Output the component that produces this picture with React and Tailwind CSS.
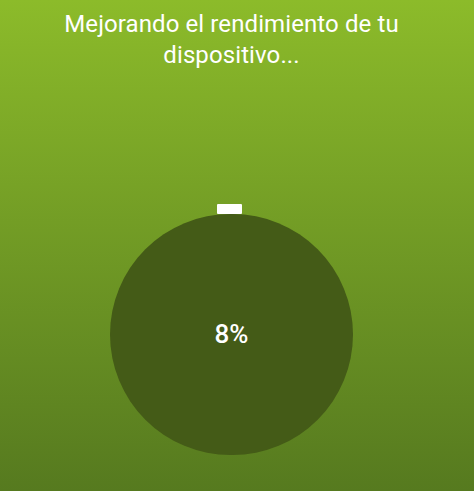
export default function App() {
  return (
    <div
      className="w-[474px] h-[491px] overflow-hidden flex flex-col items-center bg-gradient-to-b from-[#8cbb2a] to-[#567a1f]"
      style={{ fontFamily: "Roboto, 'Noto Sans', sans-serif" }}
    >
      <div className="pt-[9px] w-full text-center text-white text-[24px] leading-[31px] tracking-[0.1px] pl-[20px] pr-[31px]">
        Mejorando el rendimiento de tu dispositivo...
      </div>
      <div className="mt-[133px] mr-[11px] flex flex-col items-center">
        <div className="w-[25px] h-[10px] bg-white rounded-[1px] -ml-[4px]" />
        <div className="w-[243px] h-[241px] rounded-full bg-[#445b17] flex items-center justify-center">
          <span className="text-white text-[26px] font-medium">8%</span>
        </div>
      </div>
    </div>
  );
}
